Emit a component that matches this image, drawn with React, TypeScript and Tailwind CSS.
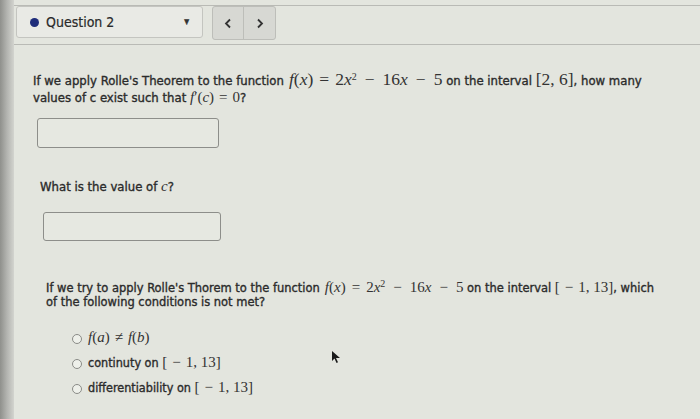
import React from "react";

const sans = { fontFamily: '"DejaVu Sans Condensed", "DejaVu Sans", sans-serif' };

function M({ children, big }: { children: React.ReactNode; big?: boolean }) {
  return (
    <span
      className={
        "font-['Liberation_Serif',serif] font-normal text-[#333] leading-[14px] [-webkit-text-stroke:0px] " +
        (big ? "text-[17.5px]" : "text-[15px]")
      }
    >
      {children}
    </span>
  );
}
function I({ children }: { children: React.ReactNode }) {
  return <span className="italic">{children}</span>;
}

function Fx({ big }: { big?: boolean }) {
  return (
    <M big={big}>
      <span className="ml-[5px]" />
      <I>f</I>(<I>x</I>)<span className="mx-[6px]">=</span>2<I>x</I>
      <sup className="text-[10px] leading-none">2</sup>
      <span className="mx-[8px]">−</span>16<I>x</I>
      <span className="mx-[8px]">−</span>5
    </M>
  );
}

function Interval() {
  return (
    <M>
      [<span className="mx-[5px]">−</span>1, 13]
    </M>
  );
}

function Radio({ children }: { children: React.ReactNode }) {
  return (
    <div className="flex items-center gap-[6px] h-[25px]">
      <span className="w-[10px] h-[10px] rounded-full border border-[#8a8b87] bg-[#eef0ea]" />
      <span>{children}</span>
    </div>
  );
}

function Chevron({ left }: { left?: boolean }) {
  return (
    <svg width="8" height="11" viewBox="0 0 8 11">
      <path
        d={left ? "M6 1.5 L2 5.5 L6 9.5" : "M2 1.5 L6 5.5 L2 9.5"}
        stroke="#333"
        strokeWidth="1.8"
        fill="none"
      />
    </svg>
  );
}

export default function App() {
  return (
    <div
      className="w-[700px] h-[419px] bg-[#e3e5de] flex overflow-hidden relative text-[#2b2b2b] font-normal text-[13px] [-webkit-text-stroke:0.35px_#2b2b2b]"
      style={sans}
    >
      <div className="w-[14px] shrink-0 bg-gradient-to-r from-[#8f908c] via-[#b3b4b0] to-[#d3d4cf]" />
      <div className="flex-1 flex flex-col">
        <div className="mt-[5px] h-[40px] border-t border-b border-[#b9bab5] flex items-start">
          <div className="ml-[2px] w-[187px] h-[32px] bg-[#e9eae5] border border-[#c4c5c0] rounded-[3px] flex items-center px-[13px]">
            <span className="w-[9px] h-[9px] rounded-full bg-[#1f2d7a]" />
            <span className="ml-[7px] text-[14px] font-normal text-[#2a2a2a] [-webkit-text-stroke:0.2px_#2a2a2a]">
              Question 2
            </span>
            <span className="ml-auto text-[7px] text-[#333]">▼</span>
          </div>
          <div className="ml-[9px] flex h-[34px] border border-[#bdbeb9] rounded-[3px] bg-[#d7d8d3]">
            <div className="w-[31px] flex items-center justify-center border-r border-[#bdbeb9]">
              <Chevron left />
            </div>
            <div className="w-[31px] flex items-center justify-center">
              <Chevron />
            </div>
          </div>
        </div>

        <div className="ml-[19px] mt-[27px] leading-[17px] w-[660px]">
          If we apply Rolle's Theorem to the function
          <Fx big /> on the interval <M big>[2, 6]</M>, how many
          <br />
          values of c exist such that{" "}
          <M>
            <I>f</I>′(<I>c</I>)<span className="mx-[5px]">=</span>0
          </M>
          ?
        </div>

        <div className="ml-[23px] mt-[12px] w-[182px] h-[30px] border border-[#8d8e8a] rounded-[3px] bg-[#e6e8e1]" />

        <div className="ml-[26px] mt-[30px] leading-[17px]">
          What is the value of{" "}
          <M>
            <I>c</I>
          </M>
          ?
        </div>

        <div className="ml-[29px] mt-[17px] w-[178px] h-[29px] border border-[#8d8e8a] rounded-[3px] bg-[#e6e8e1]" />

        <div className="ml-[32px] mt-[39px] leading-[14px] text-[12.75px] w-[650px]">
          If we try to apply Rolle's Thorem to the function
          <Fx /> on the interval <Interval />, which
          <br />
          of the following conditions is not met?
        </div>

        <div className="ml-[58px] mt-[17px] flex flex-col text-[12.5px]">
          <Radio>
            <M>
              <I>f</I>(<I>a</I>)<span className="mx-[5px]">≠</span>
              <I>f</I>(<I>b</I>)
            </M>
          </Radio>
          <Radio>
            continuty on <Interval />
          </Radio>
          <Radio>
            differentiability on <Interval />
          </Radio>
        </div>
      </div>
      <svg className="absolute left-[331px] top-[350px]" width="12" height="14" viewBox="0 0 12 14">
        <path d="M1 1 L1 11 L3.5 8.5 L5.5 13 L7 12.3 L5 8 L9 8 Z" fill="#1a1a1a" />
      </svg>
    </div>
  );
}
